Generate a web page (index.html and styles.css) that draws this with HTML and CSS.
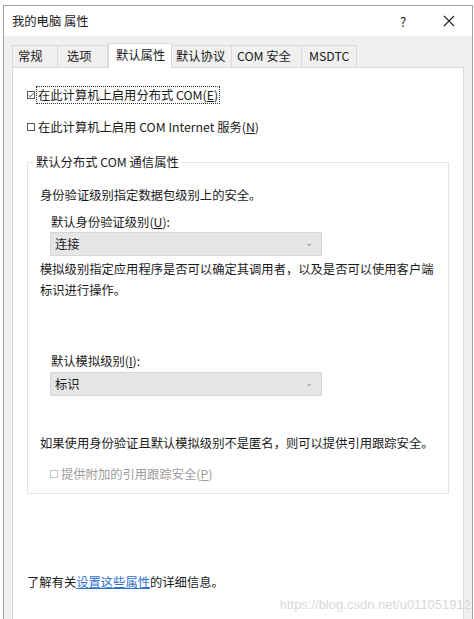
FILE: index.html
```html
<!DOCTYPE html>
<html lang="zh-CN">
<head>
<meta charset="utf-8">
<title>我的电脑 属性</title>
<link rel="stylesheet" href="styles.css">
</head>
<body>
<div class="window">
  <div class="titlebar">
    <span class="title">我的电脑 属性</span>
    <span class="tbtn help">?</span>
    <span class="tbtn close">
      <svg width="12" height="12" viewBox="0 0 12 12"><path d="M1 1 L11 11 M11 1 L1 11" stroke="#222" stroke-width="1.1" fill="none"/></svg>
    </span>
  </div>
  <div class="body">
    <div class="tabs">
      <div class="tab">常规</div>
      <div class="tab">选项</div>
      <div class="tab selected">默认属性</div>
      <div class="tab">默认协议</div>
      <div class="tab">COM 安全</div>
      <div class="tab">MSDTC</div>
    </div>
    <div class="panel">
      <div class="check-row first">
        <span class="box"><svg width="8" height="8" viewBox="0 0 8 8"><path d="M1.5 4.2 L3.2 5.8 L6.5 2.2" stroke="#444" stroke-width="0.9" fill="none"/></svg></span>
        <span class="label focus">在此计算机上启用分布式 COM(<u>E</u>)</span>
      </div>
      <div class="check-row second">
        <span class="box"></span>
        <span class="label">在此计算机上启用 COM Internet 服务(<u>N</u>)</span>
      </div>
      <fieldset class="group">
        <legend>默认分布式 COM 通信属性</legend>
        <p class="text t1">身份验证级别指定数据包级别上的安全。</p>
        <div class="field f1">
          <div class="flabel">默认身份验证级别(<u>U</u>):</div>
          <div class="select"><span>连接</span><span class="chev">⌄</span></div>
        </div>
        <p class="text t2">模拟级别指定应用程序是否可以确定其调用者，以及是否可以使用客户端标识进行操作。</p>
        <div class="field f2">
          <div class="flabel">默认模拟级别(<u>I</u>):</div>
          <div class="select"><span>标识</span><span class="chev">⌄</span></div>
        </div>
        <p class="text t3">如果使用身份验证且默认模拟级别不是匿名，则可以提供引用跟踪安全。</p>
        <div class="check-row third disabled">
          <span class="box"></span>
          <span class="label">提供附加的引用跟踪安全(<u>P</u>)</span>
        </div>
      </fieldset>
      <p class="more">了解有关<a href="#">设置这些属性</a>的详细信息。</p>
    </div>
  </div>
</div>
<div class="watermark">https://blog.csdn.net/u011051912</div>
</body>
</html>
```
FILE: styles.css
```css
html, body {
  margin: 0;
  padding: 0;
  background: #fff;
}
body {
  width: 474px;
  height: 619px;
  overflow: hidden;
  position: relative;
  font-family: "Noto Sans CJK SC", "Noto Sans", sans-serif;
  font-size: 12.3px;
  color: #1a1a1a;
}
.window {
  margin: 5px 1px 0 3px;
  height: 614px;
  box-sizing: border-box;
  border: 1px solid #a0a0a0;
  border-bottom: none;
  display: flex;
  flex-direction: column;
}
.titlebar {
  height: 30px;
  display: flex;
  align-items: center;
  padding-left: 8px;
  background: #fff;
}
.title {
  flex: 1;
  line-height: 17px;
  margin-top: 1px;
}
.tbtn {
  width: 46px;
  height: 30px;
  display: flex;
  align-items: center;
  justify-content: center;
}
.help {
  font-size: 13px;
  color: #222;
}
.body {
  flex: 1;
  background: #f0f0f0;
  padding: 7px 8px 0 8px;
  display: flex;
  flex-direction: column;
}
.tabs {
  display: flex;
  align-items: flex-end;
  height: 24px;
  position: relative;
  z-index: 1;
}
.tab {
  box-sizing: border-box;
  height: 22px;
  border: 1px solid #dadada;
  border-bottom: none;
  border-left: none;
  background: #f0f0f0;
  line-height: 20px;
  white-space: nowrap;
}
.tab:first-child { border-left: 1px solid #dadada; width: 46px; padding-left: 5px; }
.tab:nth-child(2) { width: 50px; padding-left: 9px; }
.tab:nth-child(3) { width: 64px; padding-left: 7px; }
.tab:nth-child(4) { width: 60px; padding-left: 4px; }
.tab:nth-child(5) { width: 70px; padding-left: 5px; }
.tab:nth-child(6) { width: 55px; padding-left: 7px; }
.tab.selected {
  height: 25px;
  margin-bottom: -1px;
  background: #fff;
  border-left: 1px solid #dadada;
  line-height: 22px;
}
.panel {
  flex: 1;
  background: #fff;
  border: 1px solid #dadada;
  border-bottom: none;
  padding: 0 14px 0 14px;
}
.check-row {
  display: flex;
  align-items: center;
  height: 18px;
}
.check-row.first { margin-top: 18px; }
.check-row.second { margin-top: 14px; }
.box {
  width: 8px;
  height: 8px;
  box-sizing: border-box;
  border: 1px solid #5a5a5a;
  display: flex;
  align-items: center;
  justify-content: center;
  margin-right: 3px;
  flex: none;
}
.box svg { display: block; margin: -1px; }
.label {
  line-height: 16px;
  white-space: nowrap;
}
.label.focus {
  outline: 1px dotted #333;
  outline-offset: 0;
  padding: 0 1px;
  margin-left: -1px;
}
u {
  text-decoration: underline;
  text-underline-offset: 1px;
}
.group {
  margin: 18px 0 0 0;
  border: 1px solid #e3e3e3;
  padding: 16px 14px 10px 12px;
  width: 422px;
  box-sizing: border-box;
}
.group legend {
  padding: 0 2px;
  margin-left: -6px;
  line-height: 17px;
}
.text {
  margin: 0;
  line-height: 17px;
  white-space: nowrap;
}
.text.t2 {
  line-height: 21px;
  margin-top: 3px;
  white-space: normal;
}
.text.t3 { margin-top: 39px; }
.field {
  padding-left: 10px;
}
.field.f1 { margin-top: 10px; }
.field.f2 { margin-top: 52px; }
.flabel {
  line-height: 17px;
  padding-left: 1px;
  margin-bottom: 1px;
}
.f2 .flabel { margin-bottom: 2px; }
.select {
  width: 272px;
  height: 24px;
  box-sizing: border-box;
  background: #e6e6e6;
  border: 1px solid #d6d6d6;
  display: flex;
  align-items: center;
  justify-content: space-between;
  padding: 0 8px 0 4px;
}
.chev {
  color: #a0a0a0;
  font-size: 10px;
  line-height: 10px;
  margin-top: -4px;
}
.check-row.third {
  margin-top: 13px;
  padding-left: 10px;
}
.disabled .box { border-color: #c8c8c8; }
.disabled .label { color: #9d9d9d; }
.more {
  margin: 80px 0 0 0;
  line-height: 17px;
}
.more a {
  color: #2f6fd0;
  text-decoration: underline;
  text-underline-offset: 1px;
}
.watermark {
  position: absolute;
  right: 3px;
  top: 597px;
  font-family: "Liberation Sans", Arial, sans-serif;
  font-size: 13px;
  color: #d8d8d8;
  line-height: 16px;
}
```
